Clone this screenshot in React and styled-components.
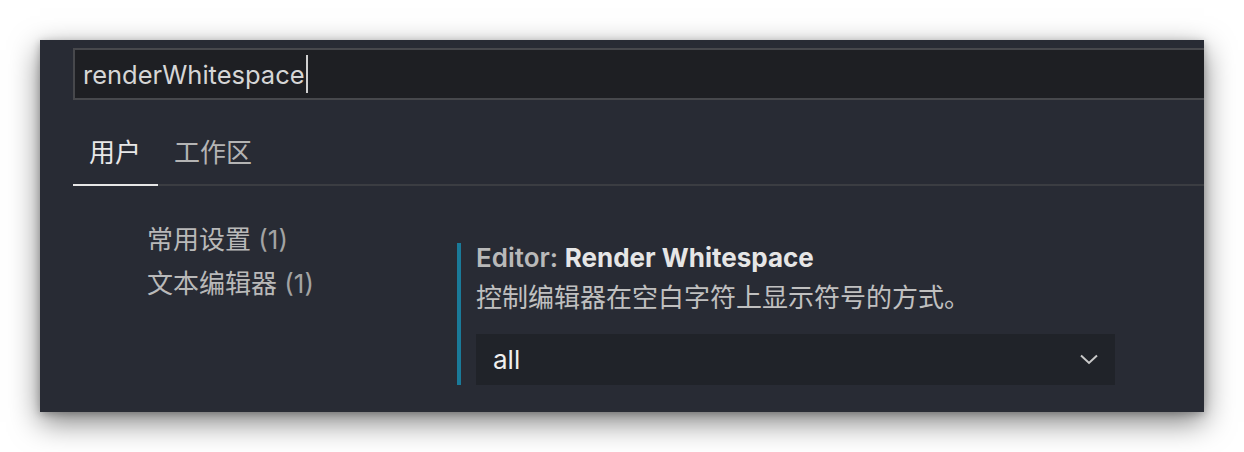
import React from 'react';
import styled, { createGlobalStyle } from 'styled-components';

const Global = createGlobalStyle`
  html, body { margin: 0; padding: 0; background: #ffffff; }
  body { font-family: Inter, "Noto Sans CJK SC", sans-serif; -webkit-font-smoothing: antialiased; }
`;

const Page = styled.div`
  width: 1244px;
  height: 452px;
  box-sizing: border-box;
  padding: 40px;
`;

const Panel = styled.div`
  width: 1164px;
  height: 372px;
  box-sizing: border-box;
  background: #282b34;
  box-shadow: 0 10px 28px rgba(0, 0, 0, 0.5), 0 2px 8px rgba(0, 0, 0, 0.25);
  overflow: hidden;
  padding: 8px 0 0 33px;
  display: flex;
  flex-direction: column;
`;

const SearchBox = styled.div`
  flex: none;
  width: 1200px;
  height: 52px;
  box-sizing: border-box;
  border: 2px solid #47484c;
  background: #1e1f23;
  display: flex;
  align-items: center;
  padding-left: 8px;
  font-size: 25.5px;
  color: #d6d6d6;
`;

const Caret = styled.span`
  display: inline-block;
  width: 2px;
  height: 38px;
  margin-left: 1px;
  background: #d0d0d0;
`;

const TabBar = styled.div`
  display: flex;
  border-bottom: 2px solid #3b3d42;
`;

const Tab = styled.div`
  padding: 39px 17px 17px 16px;
  line-height: 28px;
  font-size: 26px;
  color: ${p => (p.$active ? '#e8e8e8' : '#b4b4b4')};
  border-bottom: 2px solid ${p => (p.$active ? '#e6e6e6' : 'transparent')};
  margin-bottom: -2px;
`;

const Body = styled.div`
  display: flex;
`;

const Toc = styled.div`
  width: 384px;
  box-sizing: border-box;
  padding: 32px 0 0 74px;
  display: flex;
  flex-direction: column;
`;

const TocItem = styled.div`
  line-height: 44px;
  font-size: 26px;
  color: #b9b9b9;
`;

const Count = styled.span`
  color: #a3a3a3;
`;

const Setting = styled.div`
  margin-top: 57px;
  border-left: 4px solid #1a7a99;
  padding-left: 15px;
  display: flex;
  flex-direction: column;
`;

const Title = styled.div`
  line-height: 30px;
  font-size: 26px;
  font-weight: 600;
  color: #b9b9b9;
`;

const TitleName = styled.span`
  font-weight: 700;
  color: #e6e6e6;
`;

const Desc = styled.div`
  margin-top: 6px;
  line-height: 38px;
  font-size: 26px;
  color: #c0c0c0;
`;

const Select = styled.div`
  margin-top: 17px;
  width: 639px;
  height: 51px;
  box-sizing: border-box;
  background: #202329;
  display: flex;
  align-items: center;
  justify-content: space-between;
  padding: 0 17px 0 17px;
  font-size: 26px;
  color: #efefef;
`;

const Chevron = () => (
  <svg width="18" height="11" viewBox="0 0 18 11" fill="none">
    <path d="M1 1.5 L9 9 L17 1.5" stroke="#c9c9c9" strokeWidth="2" />
  </svg>
);

export default function App() {
  return (
    <Page>
      <Global />
      <Panel>
        <SearchBox>
          renderWhitespace<Caret />
        </SearchBox>
        <TabBar>
          <Tab $active>用户</Tab>
          <Tab>工作区</Tab>
        </TabBar>
        <Body>
          <Toc>
            <TocItem>常用设置 <Count>(1)</Count></TocItem>
            <TocItem>文本编辑器 <Count>(1)</Count></TocItem>
          </Toc>
          <Setting>
            <Title>Editor: <TitleName>Render Whitespace</TitleName></Title>
            <Desc>控制编辑器在空白字符上显示符号的方式。</Desc>
            <Select>
              <span>all</span>
              <Chevron />
            </Select>
          </Setting>
        </Body>
      </Panel>
    </Page>
  );
}
